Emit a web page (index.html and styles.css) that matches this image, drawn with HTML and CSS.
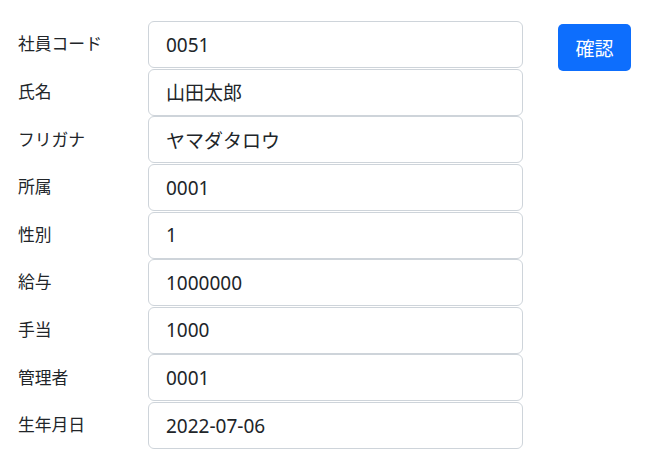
FILE: index.html
```html
<!DOCTYPE html>
<html lang="ja">
<head>
<meta charset="utf-8">
<link rel="stylesheet" href="styles.css">
</head>
<body>
<div class="page">
  <div class="form">
    <div class="row"><label class="lbl">社員コード</label><input class="ctl" value="0051"></div>
    <div class="row"><label class="lbl">氏名</label><input class="ctl" value="山田太郎"></div>
    <div class="row"><label class="lbl">フリガナ</label><input class="ctl" value="ヤマダタロウ"></div>
    <div class="row"><label class="lbl">所属</label><input class="ctl" value="0001"></div>
    <div class="row"><label class="lbl">性別</label><input class="ctl" value="1"></div>
    <div class="row"><label class="lbl">給与</label><input class="ctl" value="1000000"></div>
    <div class="row"><label class="lbl">手当</label><input class="ctl" value="1000"></div>
    <div class="row"><label class="lbl">管理者</label><input class="ctl" value="0001"></div>
    <div class="row"><label class="lbl">生年月日</label><input class="ctl" value="2022-07-06"></div>
  </div>
  <div class="side">
    <button class="btn">確認</button>
  </div>
</div>
</body>
</html>
```
FILE: styles.css
```css
html, body {
  margin: 0;
  padding: 0;
  background: #fff;
}
body {
  font-family: "Noto Sans", "Noto Sans CJK JP", sans-serif;
  color: #212529;
}
.page {
  display: flex;
  align-items: flex-start;
  padding: 21px 0 0 18px;
  gap: 35px;
}
.form {
  display: flex;
  flex-direction: column;
}
.row {
  display: flex;
  align-items: center;
  height: 47.6px;
}
.lbl {
  width: 130px;
  font-size: 16.8px;
  line-height: 1;
}
.ctl {
  box-sizing: border-box;
  width: 375px;
  height: 47px;
  border: 1px solid #ced4da;
  border-radius: 6px;
  padding: 0 17px;
  font-family: inherit;
  font-size: 19px;
  color: #212529;
  background: #fff;
  outline: none;
}
.side {
  padding-top: 3px;
}
.btn {
  box-sizing: border-box;
  width: 73px;
  height: 47px;
  border: none;
  border-radius: 5px;
  background: #0d6efd;
  color: #fff;
  font-family: "Noto Sans CJK JP", sans-serif;
  font-size: 19px;
  padding: 0;
}
```
